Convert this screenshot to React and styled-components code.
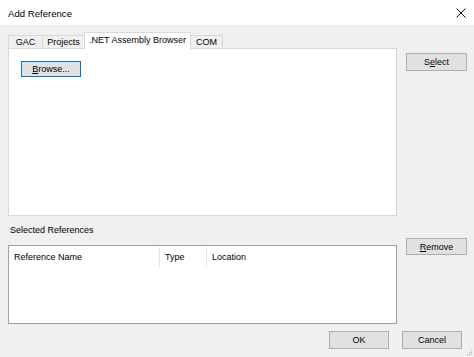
import React from "react"
import styled, { createGlobalStyle } from "styled-components"

const Global = createGlobalStyle`
	html, body {
		margin: 0;
		padding: 0;
		background: #f0f0f0;
		overflow: hidden;
	}
	* {
		box-sizing: border-box;
	}
`

const Window = styled.div`
	position: relative;
	width: 474px;
	height: 357px;
	background: #f0f0f0;
	display: flex;
	flex-direction: column;
	font-family: "Liberation Sans", Arial, sans-serif;
	font-size: 9px;
	color: #000;
`

const TitleBar = styled.div`
	height: 25px;
	background: #fff;
	display: flex;
	align-items: center;
	justify-content: space-between;
	padding: 0 8px 0 8px;
	flex-shrink: 0;
`

const Title = styled.span`
	font-size: 9.6px;
	padding-top: 2px;
`

const Close = styled.svg`
	width: 10px;
	height: 10px;
	margin-top: 1px;
`

const Content = styled.div`
	display: grid;
	grid-template-columns: 389px 61px;
	column-gap: 9px;
	padding: 7px 0 0 8px;
`

const Side = styled.div`
	padding-top: ${(p) => p.$top}px;
`

const TabStrip = styled.div`
	display: flex;
	align-items: flex-end;
	height: 16px;
`

const Tab = styled.div`
	width: ${(p) => p.$w}px;
	height: ${(p) => (p.$active ? 17 : 13)}px;
	margin-left: -1px;
	margin-bottom: ${(p) => (p.$active ? -1 : 0)}px;
	position: relative;
	z-index: ${(p) => (p.$active ? 2 : 1)};
	background: ${(p) => (p.$active ? "#fff" : "#f0f0f0")};
	border: 1px solid #d9d9d9;
	border-bottom: none;
	display: flex;
	align-items: center;
	justify-content: center;
	padding-bottom: ${(p) => (p.$active ? 2 : 0)}px;
	white-space: nowrap;

	&:first-child {
		margin-left: 0;
	}
`

const Panel = styled.div`
	height: 168px;
	background: #fff;
	border: 1px solid #d9d9d9;
	padding: 12px 0 0 12px;
`

const Button = styled.button`
	display: flex;
	align-items: center;
	justify-content: center;
	width: ${(p) => p.$w || 61}px;
	height: ${(p) => p.$h || 18}px;
	padding: 0;
	background: #e1e1e1;
	border: 1px solid ${(p) => (p.$focus ? "#0078d7" : "#adadad")};
	font-family: "Liberation Sans", Arial, sans-serif;
	font-size: 9px;
	color: #000;
`

const Key = styled.span`
	text-decoration: underline;
`

const Label = styled.div`
	height: 29px;
	line-height: 29px;
	padding-left: 2px;
`

const List = styled.div`
	height: 79px;
	background: #fff;
	border: 1px solid #a0a0a0;
`

const Header = styled.div`
	display: flex;
	height: 22px;
`

const Column = styled.div`
	width: ${(p) => (p.$w ? `${p.$w}px` : "auto")};
	flex: ${(p) => (p.$w ? "none" : "1")};
	display: flex;
	align-items: center;
	padding-left: 5px;
	margin: 1px 0;
	border-right: ${(p) => (p.$w ? "1px solid #e5e5e5" : "none")};
`

const Footer = styled.div`
	display: flex;
	justify-content: flex-end;
	gap: 13px;
	padding: 7px 12px 0 0;
`

const Grip = styled.svg`
	position: absolute;
	right: 1px;
	bottom: 1px;
	width: 8px;
	height: 8px;
`

const tabs = [
	{ label: "GAC", w: 35 },
	{ label: "Projects", w: 43 },
	{ label: ".NET Assembly Browser", w: 107, active: true },
	{ label: "COM", w: 33 },
]

const App = () => {
	return (
		<Window>
			<Global />
			<TitleBar>
				<Title>Add Reference</Title>
				<Close viewBox="0 0 10 10">
					<path d="M0.5 0.5 L9.5 9.5 M9.5 0.5 L0.5 9.5" stroke="#111" strokeWidth="1" />
				</Close>
			</TitleBar>
			<Content>
				<div>
					<TabStrip>
						{tabs.map((t) => (
							<Tab key={t.label} $w={t.w} $active={t.active}>
								{t.label}
							</Tab>
						))}
					</TabStrip>
					<Panel>
						<Button $w={60} $h={16} $focus>
							<Key>B</Key>rowse...
						</Button>
					</Panel>
				</div>
				<Side $top={21}>
					<Button>
						S<Key>e</Key>lect
					</Button>
				</Side>
				<div>
					<Label>Selected References</Label>
					<List>
						<Header>
							<Column $w={151}>Reference Name</Column>
							<Column $w={47}>Type</Column>
							<Column>Location</Column>
						</Header>
					</List>
				</div>
				<Side $top={22}>
					<Button $h={17}>
						<Key>R</Key>emove
					</Button>
				</Side>
			</Content>
			<Footer>
				<Button $w={60}>OK</Button>
				<Button $w={60}>Cancel</Button>
			</Footer>
			<Grip viewBox="0 0 8 8">
				<rect x="6" y="2" width="1" height="1" fill="#b0b0b0" />
				<rect x="4" y="4" width="1" height="1" fill="#b0b0b0" />
				<rect x="6" y="4" width="1" height="1" fill="#b0b0b0" />
				<rect x="2" y="6" width="1" height="1" fill="#b0b0b0" />
				<rect x="4" y="6" width="1" height="1" fill="#b0b0b0" />
				<rect x="6" y="6" width="1" height="1" fill="#b0b0b0" />
			</Grip>
		</Window>
	)
}

export default App
